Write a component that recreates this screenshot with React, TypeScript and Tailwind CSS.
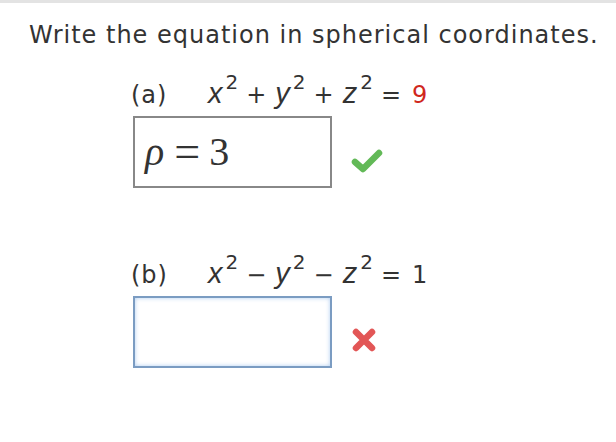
import React from 'react'

const sans = { fontFamily: '"DejaVu Sans", Verdana, sans-serif' }
const serif = { fontFamily: '"Liberation Serif", "Times New Roman", serif' }
const varFont = { fontFamily: '"Liberation Sans", Arial, sans-serif' }

function V({ children }: { children: React.ReactNode }) {
  // italic variable letter, a bit larger than the label text
  return <span className="text-[29px] leading-[20px] italic tracking-normal" style={varFont}>{children}</span>
}

function Sup({ children }: { children: React.ReactNode }) {
  return <span className="relative -top-[14px] text-[20px] leading-[20px] ml-[3px]">{children}</span>
}

function Op({ children }: { children: React.ReactNode }) {
  return <span className="ml-[7px] mr-[8px]">{children}</span>
}

function CheckMark() {
  return (
    <svg width="32" height="26" viewBox="0 0 32 26">
      <path d="M4 14 L12 21 L28 5" fill="none" stroke="#62b957" strokeWidth="6.5" strokeLinecap="round" strokeLinejoin="round" />
    </svg>
  )
}

function CrossMark() {
  return (
    <svg width="26" height="26" viewBox="0 0 26 26">
      <path d="M5 5 L21 21 M21 5 L5 21" fill="none" stroke="#e25656" strokeWidth="6.5" strokeLinecap="round" />
    </svg>
  )
}

export default function App() {
  return (
    <div className="w-[616px] h-[442px] bg-white text-[#333]" style={sans}>
      <div className="h-[3px] bg-[#e3e3e3]" />
      <div className="pl-[29px] pt-[17px] text-[24px] leading-[30px] tracking-[1px]">
        Write the equation in spherical coordinates.
      </div>

      <div className="pl-[131px] pt-[30px]">
        <div className="flex items-baseline h-[30px] text-[24px] leading-[30px] tracking-[1px]">
          <span className="w-[77px]">(a)</span>
          <V>x</V><Sup>2</Sup>
          <Op>+</Op>
          <V>y</V><Sup>2</Sup>
          <Op>+</Op>
          <V>z</V><Sup>2</Sup>
          <Op>=</Op>
          <span className="text-[#d0271d] ml-[2px]">9</span>
        </div>

        <div className="flex items-start mt-[6px]">
          <div className="w-[199px] h-[72px] border-2 border-[#888] flex items-center pl-[10px] ml-[2px]" style={serif}>
            <span className="text-[40px] italic leading-none">ρ</span>
            <span className="text-[46px] leading-none ml-[10px]">=</span>
            <span className="text-[40px] leading-none ml-[9px]">3</span>
          </div>
          <div className="ml-[19px] mt-[32px]">
            <CheckMark />
          </div>
        </div>

        <div className="flex items-baseline h-[30px] text-[24px] leading-[30px] tracking-[1px] mt-[72px]">
          <span className="w-[77px]">(b)</span>
          <V>x</V><Sup>2</Sup>
          <Op>−</Op>
          <V>y</V><Sup>2</Sup>
          <Op>−</Op>
          <V>z</V><Sup>2</Sup>
          <Op>=</Op>
          <span className="ml-[2px]">1</span>
        </div>

        <div className="flex items-start mt-[6px]">
          <div className="w-[199px] h-[72px] border-2 border-[#7b9cc2] ml-[2px] shadow-[inset_0_0_4px_rgba(120,170,230,0.6)]" />
          <div className="ml-[19px] mt-[31px]">
            <CrossMark />
          </div>
        </div>
      </div>
    </div>
  )
}
